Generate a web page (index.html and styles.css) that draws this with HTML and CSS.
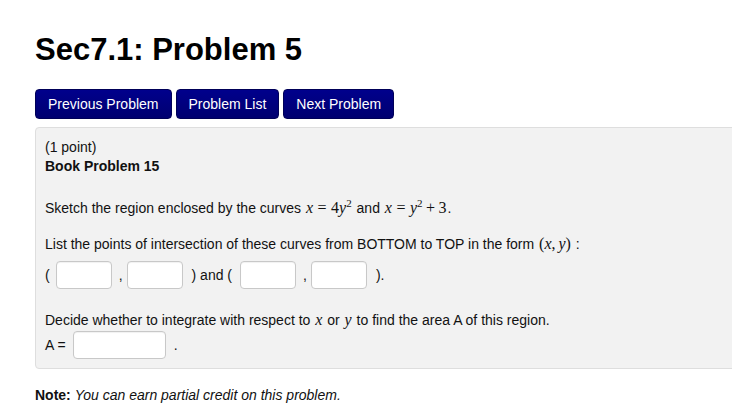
FILE: index.html
```html
<!DOCTYPE html>
<html>
<head>
<meta charset="utf-8">
<link rel="stylesheet" href="styles.css">
</head>
<body>
<div class="page">
  <h1 class="title">Sec7.1: Problem 5</h1>
  <div class="nav">
    <a class="btn">Previous Problem</a>
    <a class="btn">Problem List</a>
    <a class="btn">Next Problem</a>
  </div>
  <div class="well">
    <div class="line">(1 point)</div>
    <div class="line bold">Book Problem 15</div>
    <div class="line sketch">Sketch the region enclosed by the curves <span class="math"><i>x</i><span class="rel">=</span>4<i>y</i><sup>2</sup></span> and <span class="math"><i>x</i><span class="rel">=</span><i>y</i><sup>2</sup><span class="bin">+</span>3</span>.</div>
    <div class="line list">List the points of intersection of these curves from BOTTOM to TOP in the form <span class="math">(<i>x</i>,<span class="thin"></span><i>y</i>)</span> :</div>
    <div class="row points">
      <span>(</span><input class="ans" type="text"><span class="comma">,</span><input class="ans" type="text"><span class="and">) and (</span><input class="ans" type="text"><span class="comma">,</span><input class="ans" type="text"><span class="close">).</span>
    </div>
    <div class="line decide">Decide whether to integrate with respect to <span class="math"><i>x</i></span> or <span class="math"><i>y</i></span> to find the area A of this region.</div>
    <div class="row area">
      <span>A =</span><input class="ans wide" type="text"><span>.</span>
    </div>
  </div>
  <div class="note"><b>Note:</b> <i>You can earn partial credit on this problem.</i></div>
</div>
</body>
</html>
```
FILE: styles.css
```css
html, body {
  margin: 0;
  padding: 0;
  background: #fff;
}
body {
  font-family: "Liberation Sans", Arial, Helvetica, sans-serif;
  font-size: 14px;
  color: #111;
}
.page {
  padding-left: 35px;
  overflow: hidden;
  width: 697px;
}
.title {
  margin: 32px 0 0 0;
  font-size: 31px;
  line-height: 36px;
  font-weight: bold;
  color: #000;
}
.nav {
  display: flex;
  gap: 4px;
  margin-top: 21px;
}
.btn {
  display: block;
  padding: 4px 12px;
  line-height: 20px;
  font-size: 14px;
  color: #fff;
  background: linear-gradient(#00008c, #000070);
  border: 1px solid #000058;
  border-radius: 4px;
  white-space: nowrap;
}
.well {
  margin-top: 8px;
  width: 740px;
  background: #f2f2f2;
  border: 1px solid #dedede;
  border-radius: 4px;
  padding: 10px 9px 9px 9px;
  box-sizing: border-box;
}
.line {
  line-height: 19px;
  white-space: nowrap;
}
.bold {
  font-weight: bold;
}
.sketch {
  margin-top: 22px;
}
.list {
  margin-top: 16px;
}
.decide {
  margin-top: 21px;
}
.math {
  font-family: "Liberation Serif", "Times New Roman", serif;
  font-size: 16px;
  margin: 0 1px;
}
.math sup {
  font-size: 11px;
  line-height: 0;
  vertical-align: 6px;
}
.rel {
  margin: 0 4.5px;
}
.bin {
  margin: 0 3.5px;
}
.thin {
  display: inline-block;
  width: 3px;
}
.row {
  display: flex;
  align-items: center;
  height: 28px;
  white-space: pre;
}
.points {
  margin-top: 7px;
}
.area {
  margin-top: 1px;
}
.ans {
  box-sizing: border-box;
  width: 56px;
  height: 28px;
  margin: 0 8px 0 6px;
  padding: 0;
  border: 1px solid #c8c8c8;
  border-radius: 4px;
  background: #fff;
  box-shadow: inset 0 1px 1px rgba(0, 0, 0, 0.06);
}
.comma {
  margin-left: -1px;
  margin-right: -2px;
}
.and {
  margin-left: 1px;
  margin-right: 2px;
}
.close {
  margin-left: 1px;
}
.wide {
  width: 93px;
  margin-left: 7px;
}
.note {
  margin-top: 17px;
  line-height: 19px;
}
```
